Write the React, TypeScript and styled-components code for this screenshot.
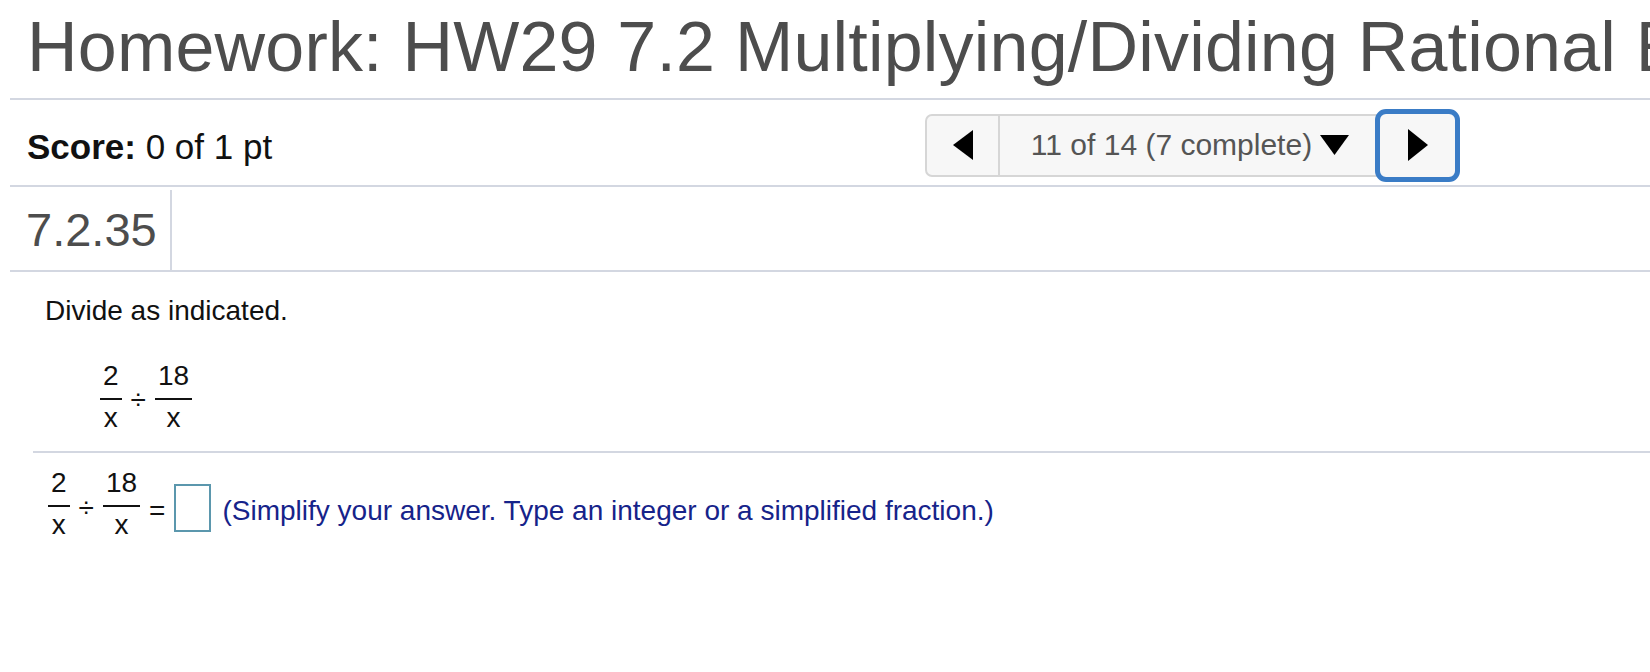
import React from "react";
import styled, { createGlobalStyle } from "styled-components";

const Global = createGlobalStyle`
  html, body { margin: 0; padding: 0; background: #ffffff; }
  body { font-family: "Liberation Sans", Arial, sans-serif; }
`;

const LINE = "#d3d7e1";

const Page = styled.div`
  width: 1650px;
  height: 672px;
  overflow: hidden;
  background: #fff;
`;

const Header = styled.header`
  margin-left: 10px;
  padding: 12px 0 16px 17px;
  border-bottom: 2px solid ${LINE};
  white-space: nowrap;
  overflow: hidden;
`;

const Title = styled.h1`
  margin: 0;
  font-size: 70px;
  line-height: 70px;
  font-weight: 400;
  color: #4d4d4d;
  letter-spacing: 0.2px;
`;

const ScoreRow = styled.div`
  margin-left: 10px;
  height: 85px;
  display: flex;
  align-items: center;
  border-bottom: 2px solid ${LINE};
`;

const Score = styled.div`
  padding-left: 17px;
  margin-top: 8px;
  font-size: 35px;
  color: #111;
  b { font-weight: 700; }
`;

const Nav = styled.div`
  margin-left: auto;
  margin-right: 195px;
  display: flex;
  height: 63px;
  margin-top: 5px;
`;

const NavButton = styled.button<{ $focused?: boolean }>`
  width: 75px;
  height: 63px;
  box-sizing: border-box;
  background: #f7f7f7;
  border: 2px solid #d6d6d6;
  border-radius: 7px 0 0 7px;
  display: flex;
  align-items: center;
  justify-content: center;
  padding: 0;
  cursor: pointer;
  ${(p) =>
    p.$focused &&
    `
    border: 2px solid #f7f7f7;
    border-radius: 6px;
    outline: 5px solid #3a7cc6;
    outline-offset: 0px;
    position: relative;
    z-index: 1;
  `}
`;

const Middle = styled.div`
  width: 380px;
  height: 63px;
  box-sizing: border-box;
  background: #f7f7f7;
  border-top: 2px solid #d6d6d6;
  border-bottom: 2px solid #d6d6d6;
  display: flex;
  align-items: center;
  justify-content: center;
  gap: 8px;
  font-size: 30px;
  color: #555;
`;

const TriLeft = () => (
  <svg width="20" height="30" viewBox="0 0 20 30">
    <polygon points="20,0 20,30 0,15" fill="#000" />
  </svg>
);
const TriRight = () => (
  <svg width="20" height="32" viewBox="0 0 20 32">
    <polygon points="0,0 0,32 20,16" fill="#000" />
  </svg>
);
const TriDown = () => (
  <svg width="29" height="20" viewBox="0 0 29 20">
    <polygon points="0,0 29,0 14.5,20" fill="#000" />
  </svg>
);

const SectionRow = styled.div`
  margin-left: 10px;
  height: 83px;
  border-bottom: 2px solid ${LINE};
  display: flex;
  align-items: flex-end;
`;

const SectionLabel = styled.div`
  box-sizing: border-box;
  height: 80px;
  width: 162px;
  padding: 13px 0 0 16px;
  border-right: 2px solid ${LINE};
  font-size: 47px;
  line-height: 53px;
  color: #4d4d4d;
`;

const Question = styled.section`
  padding: 23px 0 0 45px;
  font-size: 28px;
  color: #111;
`;

const Prompt = styled.p`
  margin: 0;
  line-height: 32px;
`;

const Expr = styled.div<{ $indent: number }>`
  display: flex;
  align-items: center;
  gap: 9px;
  padding-left: ${(p) => p.$indent}px;
`;

const ProblemExpr = styled(Expr)`
  margin-top: 34px;
`;

const FracBox = styled.span`
  display: inline-flex;
  flex-direction: column;
  align-items: center;
  font-size: 28px;
  line-height: 30px;
  color: #111;
`;

const Num = styled.span`
  padding: 0 3px 7px;
`;

const Bar = styled.span`
  align-self: stretch;
  border-top: 2px solid #111;
`;

const Den = styled.span`
  padding: 3px 3px 0;
`;

const Op = styled.span<{ $drop: number }>`
  font-size: 28px;
  line-height: 32px;
  padding-top: ${(p) => p.$drop}px;
  color: #111;
`;

const Frac = ({ n, d }: { n: string; d: string }) => (
  <FracBox>
    <Num>{n}</Num>
    <Bar />
    <Den>{d}</Den>
  </FracBox>
);

const Divider = styled.hr`
  margin: 18px 0 0 -12px;
  border: none;
  border-top: 2px solid ${LINE};
`;

const AnswerExpr = styled(Expr)`
  margin-top: 15px;
  margin-left: -45px;
`;

const AnswerBox = styled.span`
  display: inline-block;
  width: 37px;
  height: 48px;
  margin-top: 8px;
  box-sizing: border-box;
  border: 2px solid #5b97ad;
  background: #fff;
`;

const Hint = styled.span`
  font-size: 28px;
  line-height: 32px;
  padding-top: 14px;
  margin-left: 2px;
  color: #16238a;
`;

export default function App() {
  return (
    <Page>
      <Global />
      <Header>
        <Title>Homework: HW29 7.2 Multiplying/Dividing Rational Expressions</Title>
      </Header>
      <ScoreRow>
        <Score>
          <b>Score:</b> 0 of 1 pt
        </Score>
        <Nav>
          <NavButton aria-label="Previous question">
            <TriLeft />
          </NavButton>
          <Middle>
            <span>11 of 14 (7 complete)</span>
            <TriDown />
          </Middle>
          <NavButton $focused aria-label="Next question">
            <TriRight />
          </NavButton>
        </Nav>
      </ScoreRow>
      <SectionRow>
        <SectionLabel>7.2.35</SectionLabel>
      </SectionRow>
      <Question>
        <Prompt>Divide as indicated.</Prompt>
        <ProblemExpr $indent={55}>
          <Frac n="2" d="x" />
          <Op $drop={6}>÷</Op>
          <Frac n="18" d="x" />
        </ProblemExpr>
        <Divider />
        <AnswerExpr $indent={48}>
          <Frac n="2" d="x" />
          <Op $drop={8}>÷</Op>
          <Frac n="18" d="x" />
          <Op $drop={14}>=</Op>
          <AnswerBox />
          <Hint>(Simplify your answer. Type an integer or a simplified fraction.)</Hint>
        </AnswerExpr>
      </Question>
    </Page>
  );
}
